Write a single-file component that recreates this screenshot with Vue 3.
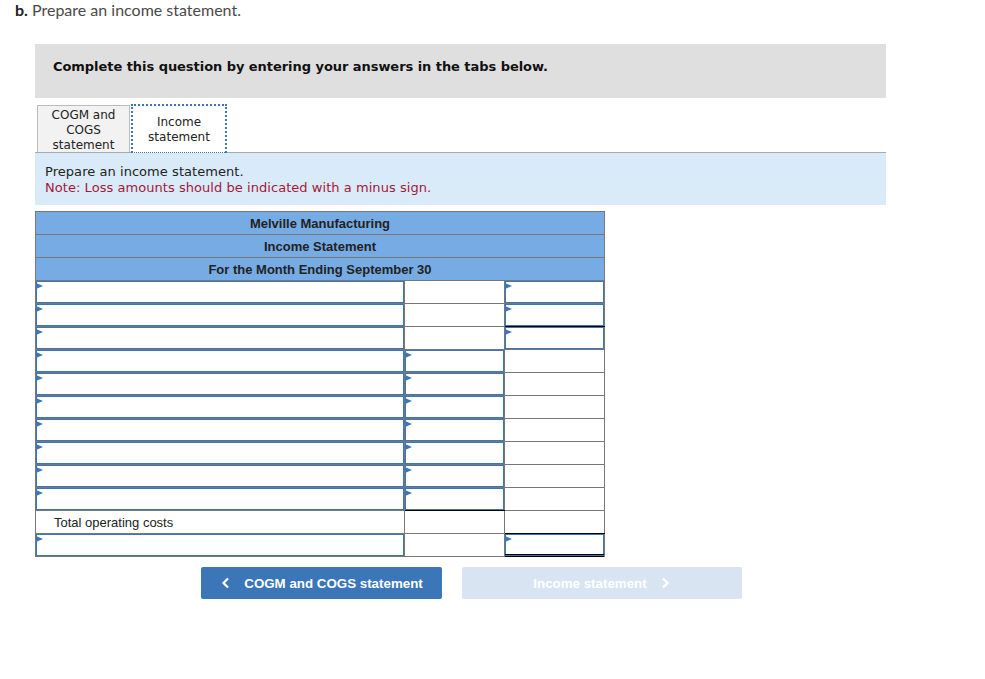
<script setup>
const headings = ['Melville Manufacturing', 'Income Statement', 'For the Month Ending September 30']

// inputs: columns holding an input, black: columns with a black rule under the row
const rows = [
  { inputs: [0, 2] },
  { inputs: [0, 2], black: [2] },
  { inputs: [0, 2] },
  { inputs: [0, 1] },
  { inputs: [0, 1] },
  { inputs: [0, 1] },
  { inputs: [0, 1] },
  { inputs: [0, 1] },
  { inputs: [0, 1] },
  { inputs: [0, 1], black: [1] },
  { inputs: [], label: 'Total operating costs', black: [2] },
  { inputs: [0, 2], double: true }
]
</script>

<template>
  <div class="page">
    <p class="part"><b>b.</b> Prepare an income statement.</p>

    <div class="question">
      <div class="banner">Complete this question by entering your answers in the tabs below.</div>

      <div class="tabs">
        <button class="tab">COGM and COGS statement</button>
        <button class="tab active">Income statement</button>
      </div>

      <div class="prompt">
        <div>Prepare an income statement.</div>
        <div class="note">Note: Loss amounts should be indicated with a minus sign.</div>
      </div>

      <table class="sheet">
        <colgroup>
          <col class="col-label">
          <col class="col-num">
          <col class="col-num">
        </colgroup>
        <thead>
          <tr v-for="heading in headings" :key="heading">
            <th colspan="3">{{ heading }}</th>
          </tr>
        </thead>
        <tbody>
          <tr v-for="(row, r) in rows" :key="r">
            <td
              v-for="c in 3"
              :key="c"
              :class="{
                'black-bottom': row.black && row.black.includes(c - 1),
                'double-bottom': row.double && c === 3
              }"
            >
              <template v-if="row.inputs.includes(c - 1)">
                <span class="marker"></span>
                <input type="text">
              </template>
              <span v-else-if="c === 1 && row.label" class="label">{{ row.label }}</span>
            </td>
          </tr>
        </tbody>
      </table>

      <div class="nav">
        <button class="nav-btn prev">
          <svg width="9" height="12" viewBox="0 0 9 12"><path d="M8 1.5 3.5 6 8 10.5" fill="none" stroke="#fff" stroke-width="2.2"/></svg>
          COGM and COGS statement
        </button>
        <button class="nav-btn next">
          Income statement
          <svg width="9" height="12" viewBox="0 0 9 12"><path d="M1 1.5 5.5 6 1 10.5" fill="none" stroke="#fff" stroke-width="2.2"/></svg>
        </button>
      </div>
    </div>
  </div>
</template>

<style scoped>
.page {
  width: 985px;
  height: 679px;
  overflow: hidden;
  box-sizing: border-box;
  background: #fff;
}

.part {
  margin: 0;
  padding: 1px 0 0 15px;
  height: 44px;
  box-sizing: border-box;
  font-family: Lato, sans-serif;
  font-size: 16px;
  line-height: 18px;
  color: #4a4a4a;
}

.part b {
  color: #222;
}

.question {
  margin-left: 35px;
  width: 851px;
}

.banner {
  height: 54px;
  box-sizing: border-box;
  padding: 14px 0 0 18px;
  background: #dfdfdf;
  font-family: "DejaVu Sans", sans-serif;
  font-size: 13px;
  font-weight: 700;
  letter-spacing: -0.05px;
  line-height: 17px;
  color: #111;
}

.tabs {
  display: flex;
  align-items: flex-end;
  height: 54px;
  padding-left: 2px;
  box-sizing: border-box;
}

.tab {
  width: 93px;
  height: 47px;
  padding: 2px 4px 0;
  box-sizing: border-box;
  border: 1px solid #bbb;
  border-bottom: none;
  background: #f2f2f2;
  font-family: "DejaVu Sans", sans-serif;
  font-size: 12px;
  line-height: 15px;
  color: #222;
}

.tab.active {
  width: 96px;
  height: 49px;
  margin-left: 1px;
  margin-bottom: -1px;
  position: relative;
  padding: 2px 10px 0;
  border: 2px dotted #3b76b8;
  border-bottom-width: 1px;
  background: #fff;
}

.prompt {
  height: 53px;
  box-sizing: border-box;
  padding: 11px 10px 0;
  border-top: 1px solid #aaa;
  background: #d9ebf9;
  font-family: "DejaVu Sans", sans-serif;
  font-size: 13px;
  letter-spacing: 0.05px;
  line-height: 16px;
  color: #222;
}

.note {
  color: #a3193a;
}

.sheet {
  margin-top: 6px;
  width: 570px;
  table-layout: fixed;
  border-collapse: collapse;
  font-family: "Liberation Sans", sans-serif;
  font-size: 13px;
  color: #222;
}

.col-num {
  width: 100px;
}

.sheet th,
.sheet td {
  height: 23px;
  padding: 0;
  box-sizing: border-box;
  border: 1px solid #777;
}

.sheet th {
  padding-top: 1px;
  background: #77abe4;
  font-weight: 700;
  text-align: center;
  line-height: 20px;
}

.sheet td {
  position: relative;
  background: #fff;
}

.sheet td.black-bottom {
  border-bottom-color: #000;
}

.sheet td.double-bottom::after {
  content: "";
  position: absolute;
  left: 0;
  right: 0;
  bottom: -1px;
  height: 1px;
  border-top: 1px solid #000;
  border-bottom: 1px solid #000;
}

.sheet input {
  display: block;
  width: 100%;
  height: 22px;
  margin: 0;
  padding: 0;
  box-sizing: border-box;
  border: 1px solid #3b76b8;
  outline: none;
  background: #fff;
}

.marker {
  position: absolute;
  z-index: 1;
  left: 0;
  top: 2px;
  border-style: solid;
  border-width: 3.5px 0 3.5px 7px;
  border-color: transparent transparent transparent #3b76b8;
}

.label {
  display: block;
  padding: 1px 0 0 18px;
  line-height: 22px;
  height: 22px;
  box-sizing: border-box;
}

.nav {
  display: flex;
  gap: 20px;
  margin-top: 10px;
  margin-left: 166px;
}

.nav-btn {
  display: flex;
  align-items: center;
  justify-content: center;
  height: 32px;
  padding: 0;
  border: none;
  border-radius: 2px;
  font-family: "Liberation Sans", sans-serif;
  font-size: 13.33px;
  font-weight: 700;
  color: #fff;
}

.prev {
  width: 241px;
  gap: 15px;
  background: #3b76b8;
}

.next {
  width: 280px;
  gap: 15px;
  background: #d9e4f2;
}
</style>

<style>
body {
  background: #fff;
}
</style>
